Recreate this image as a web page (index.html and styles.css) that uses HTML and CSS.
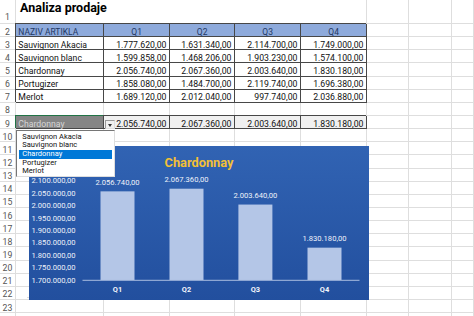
FILE: index.html
```html
<!DOCTYPE html>
<html lang="hr">
<head>
<meta charset="utf-8">
<title>Analiza prodaje</title>
<link rel="stylesheet" href="styles.css">
</head>
<body>
<div class="sheet">
  <div class="rh rh1">1</div><div class="title">Analiza prodaje</div><div></div><div></div><div></div>
  <div class="rh">2</div><div class="t hd">NAZIV ARTIKLA</div><div class="t hd c">Q1</div><div class="t hd c">Q2</div><div class="t hd c">Q3</div><div class="t hd c">Q4</div><div></div><div></div><div></div>
  <div class="rh">3</div><div class="t">Sauvignon Akacia</div><div class="t n">1.777.620,00</div><div class="t n">1.631.340,00</div><div class="t n">2.114.700,00</div><div class="t n">1.749.000,00</div><div></div><div></div><div></div>
  <div class="rh">4</div><div class="t">Sauvignon blanc</div><div class="t n">1.599.858,00</div><div class="t n">1.468.206,00</div><div class="t n">1.903.230,00</div><div class="t n">1.574.100,00</div><div></div><div></div><div></div>
  <div class="rh">5</div><div class="t">Chardonnay</div><div class="t n">2.056.740,00</div><div class="t n">2.067.360,00</div><div class="t n">2.003.640,00</div><div class="t n">1.830.180,00</div><div></div><div></div><div></div>
  <div class="rh">6</div><div class="t">Portugizer</div><div class="t n">1.858.080,00</div><div class="t n">1.484.700,00</div><div class="t n">2.119.740,00</div><div class="t n">1.696.380,00</div><div></div><div></div><div></div>
  <div class="rh">7</div><div class="t">Merlot</div><div class="t n">1.689.120,00</div><div class="t n">2.012.040,00</div><div class="t n">997.740,00</div><div class="t n">2.036.880,00</div><div></div><div></div><div></div>
  <div class="rh">8</div><div></div><div></div><div></div><div></div><div></div><div></div><div></div><div></div>
  <div class="rh">9</div><div class="t sel">Chardonnay</div><div class="t n gr">2.056.740,00</div><div class="t n gr">2.067.360,00</div><div class="t n gr">2.003.640,00</div><div class="t n gr">1.830.180,00</div><div></div><div></div><div></div>
  <div class="rh">10</div><div></div><div></div><div></div><div></div><div></div><div></div><div></div><div></div>
  <div class="rh">11</div><div></div><div></div><div></div><div></div><div></div><div></div><div></div><div></div>
  <div class="rh">12</div><div></div><div></div><div></div><div></div><div></div><div></div><div></div><div></div>
  <div class="rh">13</div><div></div><div></div><div></div><div></div><div></div><div></div><div></div><div></div>
  <div class="rh">14</div><div></div><div></div><div></div><div></div><div></div><div></div><div></div><div></div>
  <div class="rh">15</div><div></div><div></div><div></div><div></div><div></div><div></div><div></div><div></div>
  <div class="rh">16</div><div></div><div></div><div></div><div></div><div></div><div></div><div></div><div></div>
  <div class="rh">17</div><div></div><div></div><div></div><div></div><div></div><div></div><div></div><div></div>
  <div class="rh">18</div><div></div><div></div><div></div><div></div><div></div><div></div><div></div><div></div>
  <div class="rh">19</div><div></div><div></div><div></div><div></div><div></div><div></div><div></div><div></div>
  <div class="rh">20</div><div></div><div></div><div></div><div></div><div></div><div></div><div></div><div></div>
  <div class="rh">21</div><div></div><div></div><div></div><div></div><div></div><div></div><div></div><div></div>
  <div class="rh">22</div><div></div><div></div><div></div><div></div><div></div><div></div><div></div><div></div>
  <div class="rh">23</div><div></div><div></div><div></div><div></div><div></div><div></div><div></div><div></div>
  <div class="rh"></div><div></div><div></div><div></div><div></div><div></div><div></div><div></div><div></div>

  <div class="chart">
    <svg class="plot" viewBox="0 0 340 154" width="340" height="154">
      <defs>
        <linearGradient id="bg" x1="0" y1="0" x2="0" y2="1">
          <stop offset="0" stop-color="#3163b3"/>
          <stop offset="1" stop-color="#224f9e"/>
        </linearGradient>
      </defs>
      <rect width="340" height="154" fill="url(#bg)"/>
      <text class="ttl" x="170" y="20.5" text-anchor="middle">Chardonnay</text>
      <g class="yl" text-anchor="end">
        <text x="46.5" y="37.3">2.100.000,00</text>
        <text x="46.5" y="49.7">2.050.000,00</text>
        <text x="46.5" y="62.15">2.000.000,00</text>
        <text x="46.5" y="74.6">1.950.000,00</text>
        <text x="46.5" y="87">1.900.000,00</text>
        <text x="46.5" y="99.4">1.850.000,00</text>
        <text x="46.5" y="111.85">1.800.000,00</text>
        <text x="46.5" y="124.3">1.750.000,00</text>
        <text x="46.5" y="136.7">1.700.000,00</text>
      </g>
      <g class="bars">
        <rect x="71.5" y="45.35" width="34" height="88.65"/>
        <rect x="140.5" y="42.7" width="34" height="91.3"/>
        <rect x="209.4" y="58.55" width="34" height="75.45"/>
        <rect x="278.5" y="101.65" width="34" height="32.35"/>
      </g>
      <line class="axis" x1="53.5" y1="134.3" x2="330.5" y2="134.3"/>
      <g class="dl" text-anchor="middle">
        <text x="88.5" y="38.85">2.056.740,00</text>
        <text x="157.5" y="36.2">2.067.360,00</text>
        <text x="226.4" y="52.05">2.003.640,00</text>
        <text x="295.5" y="95.15">1.830.180,00</text>
      </g>
      <g class="xl" text-anchor="middle">
        <text x="88.5" y="146.3">Q1</text>
        <text x="157.5" y="146.3">Q2</text>
        <text x="226.4" y="146.3">Q3</text>
        <text x="295.5" y="146.3">Q4</text>
      </g>
    </svg>
  </div>

  <div class="ddbtn"><span class="tri"></span></div>
  <div class="ddlist">
    <div class="item">Sauvignon Akacia</div>
    <div class="item">Sauvignon blanc</div>
    <div class="item on">Chardonnay</div>
    <div class="item">Portugizer</div>
    <div class="item">Merlot</div>
  </div>
</div>
</body>
</html>
```
FILE: styles.css
```css
* { box-sizing: border-box; }
html, body { margin: 0; padding: 0; background: #fff; }
body { font-family: Roboto, "Liberation Sans", Arial, sans-serif; }

.sheet {
  position: relative;
  display: grid;
  grid-template-columns: 16px 88px 66px 65px 66px 66px 42px 43px 22px;
  grid-template-rows: 24px repeat(23, 13.15px);
  width: 474px;
  height: 316px;
  overflow: hidden;
  font-size: 8.7px;
  line-height: 12px;
  color: #111;
}
.sheet > div {
  border-right: 1px solid #dedede;
  border-bottom: 1px solid #dedede;
  padding: 1.6px 2px 0 2.3px;
  white-space: nowrap;
}
.sheet > .rh {
  color: #555;
  text-align: center;
  padding: 1.6px 0 0;
}
.sheet > .rh1 { padding-top: 11px; }
.sheet > .title {
  grid-column: span 5;
  font-size: 12.5px;
  font-weight: 700;
  line-height: 14px;
  padding: 1.4px 4px 0;
  color: #000;
}
.sheet > .t {
  border-right-color: #474747;
  border-bottom-color: #474747;
  box-shadow: -1px -1px 0 #474747;
}
.sheet > .hd { background: #8eaadb; color: #1f3864; font-size: 8.5px; }
.sheet > .c { text-align: center; }
.sheet > .n { text-align: right; padding-right: 2.6px; }
.sheet > .gr { background: #f0f0f0; }
.sheet > .sel {
  position: relative;
  background: #858585;
  color: #d6d6d6;
  box-shadow: -1px -1px 0 #217346;
}

.chart {
  position: absolute;
  left: 26.5px;
  top: 144px;
  width: 340px;
  height: 154px;
}
.plot { display: block; }
.ttl { font-size: 12.8px; font-weight: 700; fill: #f2c037; }
.yl text { font-size: 7.6px; fill: #eef2fa; }
.dl text { font-size: 7.6px; fill: #eef2fa; }
.xl text { font-size: 7.4px; font-weight: 700; fill: #f4f6fb; }
.bars rect { fill: #b4c6e7; }
.axis { stroke: #a9bde0; stroke-width: 1; }

.ddbtn {
  position: absolute;
  left: 104.5px;
  top: 119.5px;
  width: 10.5px;
  height: 9.5px;
  background: #f0f0f0;
  border: 1px solid #9a9a9a;
  display: flex;
  align-items: center;
  justify-content: center;
}
.tri {
  width: 0;
  height: 0;
  border-left: 2.5px solid transparent;
  border-right: 2.5px solid transparent;
  border-top: 3px solid #333;
}
.ddlist {
  position: absolute;
  left: 16px;
  top: 130px;
  width: 99px;
  background: #fff;
  border: 1px solid #767676;
  padding: 0.5px 0;
  font-size: 7.5px;
  line-height: 8.7px;
  color: #111;
}
.item { padding-left: 3px; white-space: nowrap; }
.item.on { background: #0078d7; color: #fff; }
```
